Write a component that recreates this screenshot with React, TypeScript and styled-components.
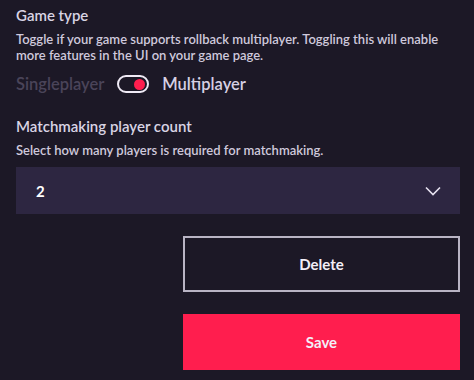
import styled, { createGlobalStyle } from 'styled-components';

const GlobalStyle = createGlobalStyle`
  html, body {
    margin: 0;
    padding: 0;
    background: #1c1826;
  }
  body {
    font-family: Lato, "Noto Sans", sans-serif;
  }
`;

const Page = styled.div`
  width: 474px;
  height: 380px;
  box-sizing: border-box;
  padding: 5px 14px 0 16px;
  background: #1c1826;
  display: flex;
  flex-direction: column;
`;

const Section = styled.section<{ $gap?: number }>`
  display: flex;
  flex-direction: column;
  margin-top: ${({ $gap }) => $gap ?? 0}px;
`;

const Title = styled.h3`
  margin: 0;
  font-size: 15px;
  font-weight: 600;
  line-height: 20px;
  color: #d9d4e4;
`;

const Hint = styled.p`
  margin: 6px 0 0;
  font-size: 13px;
  font-weight: 600;
  line-height: 16px;
  color: #cfc9dc;
`;

const ToggleRow = styled.div`
  display: flex;
  align-items: center;
  gap: 13px;
  margin-top: 10px;
  height: 22px;
`;

const ToggleLabel = styled.span<{ $active?: boolean }>`
  font-size: 16.5px;
  font-weight: 600;
  color: ${({ $active }) => ($active ? '#d6d0e4' : '#4a4459')};
`;

const Switch = styled.button<{ $on?: boolean }>`
  position: relative;
  width: 32px;
  height: 18px;
  box-sizing: border-box;
  border: 2px solid #efeaf5;
  border-radius: 9px;
  background: #1c1826;
  padding: 0;
  &::after {
    content: '';
    position: absolute;
    top: 2px;
    left: ${({ $on }) => ($on ? '15px' : '2px')};
    width: 11px;
    height: 11px;
    border-radius: 50%;
    background: #ff1e4e;
  }
`;

const Select = styled.div`
  margin-top: 9px;
  height: 47px;
  box-sizing: border-box;
  background: #2d2641;
  display: flex;
  align-items: center;
  justify-content: space-between;
  padding: 0 19px 0 20px;
  color: #ffffff;
  font-size: 15px;
  font-weight: 700;
`;

const Actions = styled.div`
  display: flex;
  flex-direction: column;
  align-items: flex-end;
  gap: 22px;
  margin-top: 22px;
`;

const Button = styled.button<{ $primary?: boolean }>`
  width: 277px;
  height: 56px;
  box-sizing: border-box;
  font-family: Lato, "Noto Sans", sans-serif;
  font-size: 15px;
  font-weight: 700;
  color: #f3eff8;
  background: ${({ $primary }) => ($primary ? '#ff1e4e' : 'transparent')};
  border: ${({ $primary }) => ($primary ? 'none' : '2px solid #b9b4c4')};
`;

export default function App() {
  return (
    <>
      <GlobalStyle />
      <Page>
        <Section>
          <Title>Game type</Title>
          <Hint>
            Toggle if your game supports rollback multiplayer. Toggling this will enable
            more features in the UI on your game page.
          </Hint>
          <ToggleRow>
            <ToggleLabel>Singleplayer</ToggleLabel>
            <Switch $on aria-label="toggle multiplayer" />
            <ToggleLabel $active>Multiplayer</ToggleLabel>
          </ToggleRow>
        </Section>
        <Section $gap={21}>
          <Title>Matchmaking player count</Title>
          <Hint>Select how many players is required for matchmaking.</Hint>
          <Select>
            <span>2</span>
            <svg width="16" height="10" viewBox="0 0 16 10" fill="none">
              <path d="M1 1.5 L8 8.5 L15 1.5" stroke="#e6e1ef" strokeWidth="1.6" />
            </svg>
          </Select>
        </Section>
        <Actions>
          <Button>Delete</Button>
          <Button $primary>Save</Button>
        </Actions>
      </Page>
    </>
  );
}
